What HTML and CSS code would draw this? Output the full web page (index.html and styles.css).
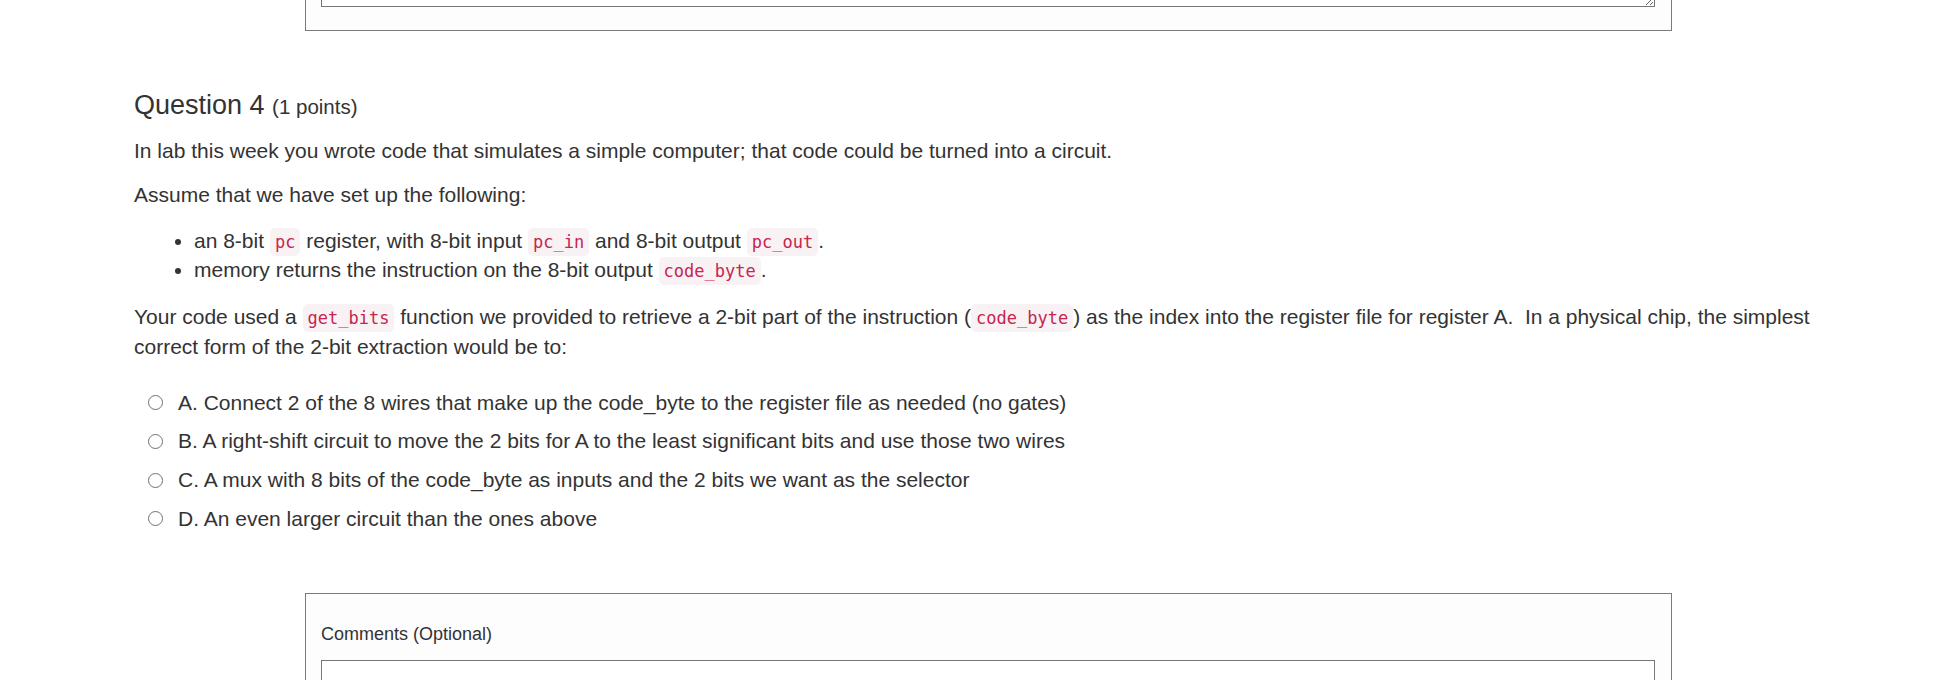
FILE: index.html
```html
<!DOCTYPE html>
<html lang="en">
<head>
<meta charset="utf-8">
<title>Question 4</title>
<link rel="stylesheet" href="styles.css">
</head>
<body>
<div class="page">
  <div class="answer-box top-box">
    <textarea class="answer-area top-area" aria-label="Previous answer"></textarea>
  </div>

  <h2 class="q-title">Question 4 <span class="q-points">(1 points)</span></h2>

  <p class="q-text first">In lab this week you wrote code that simulates a simple computer; that code could be turned into a circuit.</p>
  <p class="q-text second">Assume that we have set up the following:</p>
  <ul class="q-list">
    <li>an 8-bit <code>pc</code> register, with 8-bit input <code>pc_in</code> and 8-bit output <code>pc_out</code>.</li>
    <li>memory returns the instruction on the 8-bit output <code>code_byte</code>.</li>
  </ul>
  <p class="q-text third">Your code used a <code>get_bits</code> function we provided to retrieve a 2-bit part of the instruction (<code>code_byte</code>) as the index into the register file for register A.&nbsp; In a physical chip, the simplest correct form of the 2-bit extraction would be to:</p>

  <div class="options">
    <label class="option"><input type="radio" name="q4"><span>A. Connect 2 of the 8 wires that make up the code_byte to the register file as needed (no gates)</span></label>
    <label class="option"><input type="radio" name="q4"><span>B. A right-shift circuit to move the 2 bits for A to the least significant bits and use those two wires</span></label>
    <label class="option"><input type="radio" name="q4"><span>C. A mux with 8 bits of the code_byte as inputs and the 2 bits we want as the selector</span></label>
    <label class="option"><input type="radio" name="q4"><span>D. An even larger circuit than the ones above</span></label>
  </div>

  <div class="answer-box comments-box">
    <div class="comments-label">Comments (Optional)</div>
    <textarea class="answer-area comments-area" aria-label="Comments (Optional)"></textarea>
  </div>
</div>
</body>
</html>
```

FILE: styles.css
```css
html, body {
  margin: 0;
  padding: 0;
  background: #ffffff;
}

body {
  font-family: "Liberation Sans", Arial, sans-serif;
  color: #333333;
  overflow: hidden;
}

.page {
  padding: 0 100px 0 134px;
}

.answer-box {
  box-sizing: border-box;
  width: 1367px;
  margin-left: 171px;
  background: #fdfdfd;
  border: 1px solid #7a7a7a;
  padding: 10px 16px 23px 15px;
}

.top-box {
  margin-top: -60px;
}

.answer-area {
  display: block;
  box-sizing: border-box;
  width: 100%;
  margin: 0;
  background: #ffffff;
  border: 1px solid #767676;
  font-family: "Liberation Sans", Arial, sans-serif;
}

.top-area {
  height: 56px;
}

.q-title {
  margin: 59px 0 0;
  font-size: 27px;
  line-height: 30px;
  font-weight: normal;
  color: #333333;
}

.q-points {
  font-size: 20.5px;
}

.q-text {
  margin: 0;
  font-size: 21px;
  line-height: 28.5px;
}

.q-text.first { margin-top: 14.5px; }
.q-text.second { margin-top: 16px; }
.q-text.third { margin-top: 17.5px; }

.q-list {
  margin: 17px 0 0;
  padding-left: 60px;
  font-size: 21px;
  line-height: 28.5px;
}

code {
  font-family: "DejaVu Sans Mono", "Liberation Mono", monospace;
  font-size: 17px;
  color: #c7254e;
  background: #f9f2f4;
  border-radius: 5px;
  padding: 4px 5px;
}

.options {
  margin-top: 22.5px;
  display: flex;
  flex-direction: column;
}

.option {
  display: flex;
  align-items: center;
  height: 38.67px;
  padding-left: 14px;
  font-size: 21px;
  line-height: 28.5px;
}

.option input {
  appearance: none;
  -webkit-appearance: none;
  box-sizing: border-box;
  margin: 0 15px 0 0;
  width: 15px;
  height: 15px;
  flex: none;
  border: 1.4px solid #707070;
  border-radius: 50%;
  background: #ffffff;
}

.comments-box {
  margin-top: 55px;
  padding-top: 27.5px;
  height: 200px;
}

.comments-label {
  font-size: 18px;
  line-height: 25px;
  margin-bottom: 13.5px;
}

.comments-area {
  height: 120px;
}
```
